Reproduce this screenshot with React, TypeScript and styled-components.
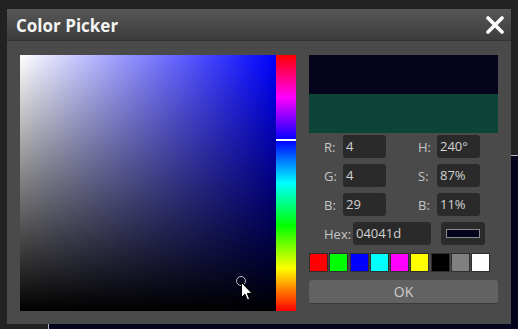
import styled, { createGlobalStyle } from 'styled-components';

const GlobalStyle = createGlobalStyle`
  html, body {
    margin: 0;
    padding: 0;
    background: #222222;
    font-family: 'Open Sans', 'DejaVu Sans', sans-serif;
    overflow: hidden;
  }
`;

const Page = styled.div`
  position: relative;
  width: 518px;
  height: 329px;
  background: #222222;
  overflow: hidden;
`;

// swatch box that sits behind the dialog
const BehindSwatch = styled.div`
  position: absolute;
  left: 48px;
  top: 155px;
  width: 600px;
  height: 300px;
  background: #04041d;
  border: 1px solid #b8b8c0;
`;

const Dialog = styled.div`
  position: absolute;
  left: 7px;
  top: 9px;
  width: 504px;
  height: 315px;
  background: #4a4a4a;
  display: flex;
  flex-direction: column;
`;

const TitleBar = styled.div`
  height: 31px;
  display: flex;
  align-items: center;
  justify-content: space-between;
  padding: 0 7px 0 9px;
  background: linear-gradient(to bottom, #575757, #3c3c3c);
  border-bottom: 1px solid #333333;
`;

const Title = styled.div`
  color: #f4f4f4;
  font-size: 17px;
  font-weight: 700;
  margin-top: 1px;
`;

const Close = styled.div`
  width: 18px;
  height: 18px;
  display: flex;
`;

const Body = styled.div`
  display: flex;
  gap: 13px;
  padding: 14px 13px 0 13px;
`;

const Picker = styled.div`
  display: flex;
`;

const SatPanel = styled.div`
  position: relative;
  width: 256px;
  height: 256px;
  background: linear-gradient(to top, #000, rgba(0, 0, 0, 0)),
    linear-gradient(to right, #fff, #00f);
`;

const SatCursor = styled.div`
  position: absolute;
  left: 216px;
  top: 221px;
  width: 8px;
  height: 8px;
  border: 1.5px solid #bdbdbd;
  border-radius: 50%;
`;

const Pointer = styled.svg`
  position: absolute;
  left: 221px;
  top: 227px;
`;

const HueBar = styled.div`
  position: relative;
  width: 20px;
  height: 256px;
  background: linear-gradient(
    to bottom,
    #f00 0%,
    #f0f 16.67%,
    #00f 33.33%,
    #0ff 50%,
    #0f0 66.67%,
    #ff0 83.33%,
    #f00 100%
  );
`;

const HueMarker = styled.div`
  position: absolute;
  left: 0;
  right: 0;
  top: 84px;
  height: 2px;
  background: #fff;
`;

const Side = styled.div`
  width: 189px;
  display: flex;
  flex-direction: column;
`;

const Preview = styled.div`
  display: flex;
  flex-direction: column;
  height: 78px;
`;

const PreviewHalf = styled.div<{ $c: string }>`
  flex: 1;
  background: ${(p) => p.$c};
`;

const Fields = styled.div`
  display: grid;
  grid-template-columns: 94px 80px;
  row-gap: 6px;
  margin: 2px 0 0 15px;
`;

const Field = styled.div`
  display: flex;
  align-items: center;
`;

const Label = styled.span<{ $w?: number }>`
  width: ${(p) => p.$w ?? 19}px;
  color: #c4c4c4;
  font-size: 13px;
`;

const Input = styled.div<{ $w?: number }>`
  width: ${(p) => p.$w ?? 43}px;
  height: 23px;
  box-sizing: border-box;
  padding-left: 3px;
  background: #2a2a2a;
  border-radius: 3px;
  color: #d2d2d2;
  font-size: 13px;
  line-height: 23px;
`;

const HexRow = styled.div`
  grid-column: 1 / 3;
  display: flex;
  align-items: center;
`;

const SwatchButton = styled.div`
  width: 44px;
  height: 23px;
  margin-left: 10px;
  box-sizing: border-box;
  background: #2a2a2a;
  border-radius: 3px;
  display: flex;
  align-items: center;
  justify-content: center;
`;

const SwatchInner = styled.div`
  width: 34px;
  height: 9px;
  box-sizing: border-box;
  background: #04041d;
  border: 1px solid #8a8a8a;
`;

const Swatches = styled.div`
  display: flex;
  gap: 1.25px;
  margin-top: 8px;
`;

const Swatch = styled.div<{ $c: string }>`
  width: 19px;
  height: 19px;
  box-sizing: border-box;
  background: ${(p) => p.$c};
  border: 1px solid #2e2e2e;
`;

const OkButton = styled.div`
  margin-top: 8px;
  height: 24px;
  background: #626262;
  border-radius: 3px;
  border-bottom: 1px solid #3a3a3a;
  box-sizing: border-box;
  color: #cfcfcf;
  font-size: 14px;
  display: flex;
  align-items: center;
  justify-content: center;
`;

const presets = ['#ff0000', '#00ff00', '#0000ff', '#00ffff', '#ff00ff', '#ffff00', '#000000', '#808080', '#ffffff'];

export default function App() {
  return (
    <Page>
      <GlobalStyle />
      <BehindSwatch />
      <Dialog>
        <TitleBar>
          <Title>Color Picker</Title>
          <Close>
            <svg width="18" height="18" viewBox="0 0 18 18">
              <path d="M2 2 L16 16 M16 2 L2 16" stroke="#fff" strokeWidth="3.6" strokeLinecap="round" />
            </svg>
          </Close>
        </TitleBar>
        <Body>
          <Picker>
            <SatPanel>
              <SatCursor />
              <Pointer width="12" height="19" viewBox="0 0 12 19">
                <path
                  d="M0.5 0.5 L0.5 15.5 L4 12.2 L6.4 17.8 L8.6 16.9 L6.3 11.4 L11 11.4 Z"
                  fill="#fff"
                  stroke="#000"
                  strokeWidth="1"
                  strokeLinejoin="round"
                />
              </Pointer>
            </SatPanel>
            <HueBar>
              <HueMarker />
            </HueBar>
          </Picker>
          <Side>
            <Preview>
              <PreviewHalf $c="#04041d" />
              <PreviewHalf $c="#0c4538" />
            </Preview>
            <Fields>
              <Field>
                <Label>R:</Label>
                <Input>4</Input>
              </Field>
              <Field>
                <Label>H:</Label>
                <Input>240°</Input>
              </Field>
              <Field>
                <Label>G:</Label>
                <Input>4</Input>
              </Field>
              <Field>
                <Label>S:</Label>
                <Input>87%</Input>
              </Field>
              <Field>
                <Label>B:</Label>
                <Input>29</Input>
              </Field>
              <Field>
                <Label>B:</Label>
                <Input>11%</Input>
              </Field>
              <HexRow>
                <Label $w={29}>Hex:</Label>
                <Input $w={78}>04041d</Input>
                <SwatchButton>
                  <SwatchInner />
                </SwatchButton>
              </HexRow>
            </Fields>
            <Swatches>
              {presets.map((c) => (
                <Swatch key={c} $c={c} />
              ))}
            </Swatches>
            <OkButton>OK</OkButton>
          </Side>
        </Body>
      </Dialog>
    </Page>
  );
}
